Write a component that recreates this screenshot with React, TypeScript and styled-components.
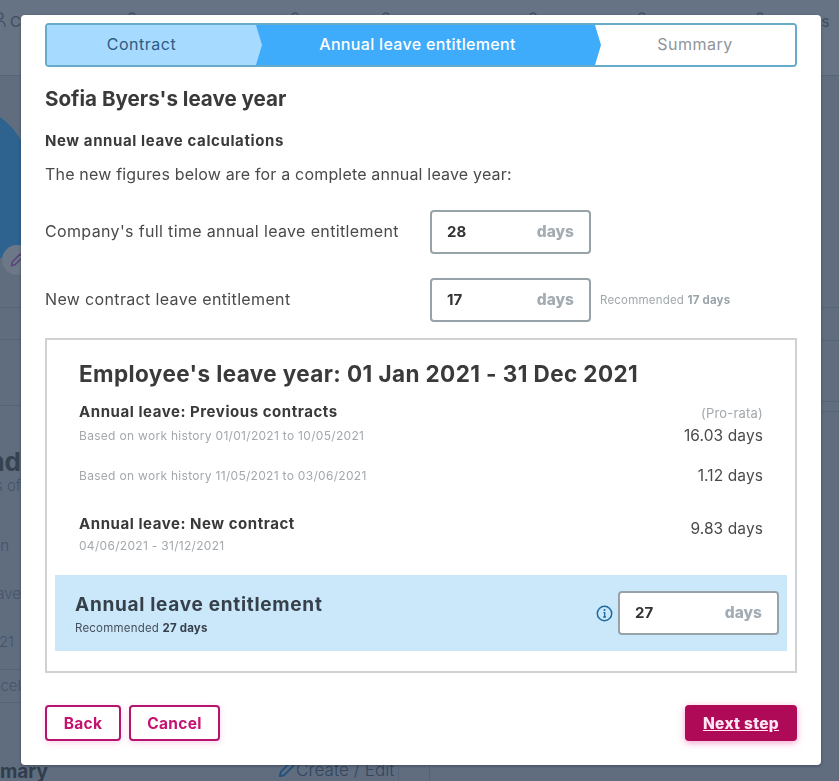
import React from 'react';
import styled, { createGlobalStyle } from 'styled-components';

const GlobalStyle = createGlobalStyle`
  html, body {
    margin: 0;
    padding: 0;
    height: 100%;
  }
  body {
    font-family: Inter, "Liberation Sans", sans-serif;
    color: #3c3c3c;
    overflow: hidden;
  }
`;

// dimmed page behind the dialog
const Page = styled.div`
  width: 839px;
  height: 781px;
  background: #5f6d7f;
  display: flex;
  flex-direction: column;
  overflow: hidden;
  color: #3f4d60;
`;

const Nav = styled.div`
  height: 76px;
  flex: none;
  box-sizing: border-box;
  border-bottom: 1px solid #56647a;
  display: flex;
  margin-left: -6px;
  padding-top: 12px;
  font-size: 15px;
  background: #667384;
`;

const NavItem = styled.div<{ $width: number }>`
  flex: 0 0 ${(p) => p.$width}px;
  display: flex;
  gap: 4px;
  white-space: nowrap;
`;

const Body = styled.div`
  flex: 1;
  display: flex;
  justify-content: space-between;
  min-height: 0;
`;

const SideColumn = styled.div`
  width: 21px;
  display: flex;
  flex-direction: column;
  align-items: flex-end;
`;

const Avatar = styled.div`
  flex: none;
  width: 156px;
  height: 156px;
  margin: 26px -11px 0 0;
  border-radius: 0 78px 0 0;
  background: #2e6390;
`;

const PencilBadge = styled.div`
  flex: none;
  width: 30px;
  height: 30px;
  margin: -13px -11px 0 0;
  border-radius: 50%;
  background: #6c7888;
  display: flex;
  align-items: center;
  justify-content: center;
`;

const SideLine = styled.div<{ $top: number }>`
  flex: none;
  width: 21px;
  height: 1px;
  margin-top: ${(p) => p.$top}px;
  background: #55637a;
`;

const SideText = styled.div<{ $top: number; $bold?: boolean; $right?: number }>`
  flex: none;
  margin-top: ${(p) => p.$top}px;
  margin-right: ${(p) => p.$right ?? 0}px;
  height: 18px;
  line-height: 18px;
  white-space: nowrap;
  font-size: ${(p) => (p.$bold ? 26 : 15)}px;
  font-weight: ${(p) => (p.$bold ? 700 : 300)};
  color: ${(p) => (p.$bold ? '#36424f' : '#46546a')};
`;

const RightColumn = styled.div`
  width: 18px;
  display: flex;
  flex-direction: column;
`;

const PageFooter = styled.div`
  flex: none;
  height: 23px;
  display: flex;
  align-items: center;
  font-size: 17px;
  white-space: nowrap;
`;

const PageFooterTitle = styled.div`
  width: 277px;
  font-weight: 700;
  font-size: 19px;
  color: #303d4c;
  margin-top: 3px;
`;

const EditLink = styled.div`
  display: flex;
  align-items: center;
  gap: 0;
  width: 121px;
  font-weight: 300;
  color: #33465f;
  letter-spacing: 0.1px;
  height: 23px;
  border-right: 1px solid #55637a;
`;

const FooterDivider = styled.div`
  width: 30px;
  height: 23px;
  border-right: 1px solid #55637a;
`;

// dialog
const Modal = styled.div`
  position: fixed;
  left: 21px;
  top: 15px;
  width: 800px;
  height: 750px;
  box-sizing: border-box;
  padding: 8px 24px 0;
  background: #fff;
  border-radius: 4px;
  box-shadow: 0 1px 3px rgba(30, 40, 55, 0.45);
  display: flex;
  flex-direction: column;
`;

const Stepper = styled.div`
  height: 44px;
  box-sizing: border-box;
  border: 2px solid #66abc9;
  border-radius: 4px;
  display: flex;
  overflow: hidden;
  flex: none;
`;

type StepState = 'done' | 'active' | 'todo';

const stepBackground: Record<StepState, string> = {
  done: '#a6daff',
  active: '#3eabfb',
  todo: '#ffffff',
};

const stepColour: Record<StepState, string> = {
  done: '#2f5a80',
  active: '#ffffff',
  todo: '#8e9499',
};

const Step = styled.div<{ $state: StepState; $width?: number; $pad?: number }>`
  position: relative;
  flex: ${(p) => (p.$width ? `0 0 ${p.$width}px` : '1')};
  box-sizing: border-box;
  padding: 0 ${(p) => p.$pad ?? 0}px 2px 0;
  display: flex;
  align-items: center;
  justify-content: center;
  font-size: 16px;
  letter-spacing: ${(p) => (p.$state === 'active' ? 0.33 : 0.5)}px;
  font-weight: ${(p) => (p.$state === 'active' ? 500 : 400)};
  background: ${(p) => stepBackground[p.$state]};
  color: ${(p) => stepColour[p.$state]};

  ${(p) =>
    p.$state !== 'todo' &&
    `
    &::after {
      content: '';
      position: absolute;
      top: 0;
      bottom: 0;
      right: -6px;
      width: 6px;
      background: ${stepBackground[p.$state]};
      clip-path: polygon(0 0, 100% 50%, 0 100%);
      z-index: 1;
    }
  `}
`;

const Title = styled.h1`
  margin: 19px 0 0;
  font-size: 20.6px;
  line-height: 26px;
  font-weight: 700;
  color: #3a3a3a;
`;

const SubTitle = styled.h2`
  margin: 19px 0 0;
  font-size: 15px;
  line-height: 20px;
  letter-spacing: 0.6px;
  font-weight: 700;
  color: #3a3a3a;
`;

const Intro = styled.p`
  margin: 13px 0 0;
  font-size: 16px;
  line-height: 20px;
  font-weight: 400;
  letter-spacing: 0.18px;
  color: #4a4a4a;
`;

const FieldRow = styled.div<{ $top: number }>`
  margin-top: ${(p) => p.$top}px;
  display: flex;
  align-items: center;
  flex: none;
`;

const FieldLabel = styled.div`
  width: 385px;
  padding-bottom: 2px;
  font-size: 16px;
  letter-spacing: 0.35px;
  color: #4a4a4a;
`;

const DaysBox = styled.div`
  width: 161px;
  height: 44px;
  box-sizing: border-box;
  padding: 0 15px 1px;
  border: 2px solid #98a2a9;
  border-radius: 4px;
  background: #fff;
  display: flex;
  align-items: center;
  justify-content: space-between;
  font-size: 15px;
  font-weight: 700;
  color: #333;
`;

const DaysUnit = styled.span`
  font-size: 15.5px;
  font-weight: 800;
  color: #a3acb3;
`;

const Recommended = styled.div`
  margin-left: 9px;
  font-size: 11.5px;
  letter-spacing: 0.2px;
  color: #a0a8ad;

  b {
    font-weight: 700;
    color: #9aa4ab;
  }
`;

const Panel = styled.div`
  margin-top: 16px;
  height: 335px;
  box-sizing: border-box;
  border: 2px solid #cfd1d3;
  padding: 19px 8px 0;
  flex: none;
  display: flex;
  flex-direction: column;
`;

const PanelHeading = styled.h3`
  margin: 0 0 0 24px;
  font-size: 22.5px;
  line-height: 30px;
  letter-spacing: 0.4px;
  font-weight: 700;
  color: #3a3a3a;
`;

const LeaveRow = styled.div<{ $top: number; $centre?: boolean }>`
  margin: ${(p) => p.$top}px 24px 0;
  display: flex;
  justify-content: space-between;
  align-items: ${(p) => (p.$centre ? 'center' : 'flex-start')};
`;

const LeaveInfo = styled.div<{ $gap: number }>`
  display: flex;
  flex-direction: column;
  gap: ${(p) => p.$gap}px;
`;

const LeaveName = styled.div`
  font-size: 15px;
  line-height: 19px;
  letter-spacing: 0.55px;
  font-weight: 700;
  color: #3a3a3a;
`;

const LeaveNote = styled.div`
  font-size: 12px;
  line-height: 17px;
  letter-spacing: 0.3px;
  color: #a2a8ac;
`;

const LeaveValues = styled.div`
  display: flex;
  flex-direction: column;
  align-items: flex-end;
  gap: 3.5px;
  margin-top: 3px;
`;

const ProRata = styled.div`
  font-size: 13px;
  line-height: 17px;
  letter-spacing: 0.2px;
  color: #a2a8ac;
`;

const LeaveValue = styled.div<{ $top?: number }>`
  margin-top: ${(p) => p.$top ?? 0}px;
  font-size: 15.5px;
  line-height: 20px;
  letter-spacing: 0.1px;
  color: #4a4a4a;
`;

const Highlight = styled.div`
  margin-top: auto;
  margin-bottom: 20px;
  height: 76px;
  box-sizing: border-box;
  padding: 0 8px 0 20px;
  background: #cbe8fb;
  display: flex;
  align-items: center;
  justify-content: space-between;
`;

const HighlightText = styled.div`
  display: flex;
  flex-direction: column;
  gap: 4px;
  padding-top: 2px;
`;

const HighlightTitle = styled.div`
  font-size: 19px;
  line-height: 24px;
  letter-spacing: 0.7px;
  font-weight: 700;
  color: #36404a;
`;

const HighlightNote = styled.div`
  font-size: 11.5px;
  line-height: 14px;
  letter-spacing: 0.2px;
  color: #46505a;

  b {
    font-weight: 700;
    color: #36404a;
  }
`;

const HighlightField = styled.div`
  display: flex;
  align-items: center;
  gap: 5px;
`;

const Actions = styled.div`
  margin-top: 32px;
  display: flex;
  gap: 8px;
  flex: none;
`;

const SecondaryButton = styled.button<{ $width: number }>`
  width: ${(p) => p.$width}px;
  height: 36px;
  padding: 0;
  border: 2px solid #b5156e;
  border-radius: 4px;
  background: #fff;
  color: #c4136f;
  font-family: inherit;
  font-size: 15.5px;
  letter-spacing: 0.3px;
  font-weight: 700;
  box-shadow: 0 2px 6px rgba(240, 120, 190, 0.3);
`;

const PrimaryButton = styled.button`
  margin-left: auto;
  width: 112px;
  height: 36px;
  padding: 0;
  border: none;
  border-radius: 4px;
  background: #ae0a58;
  color: #fde6f2;
  font-family: inherit;
  font-size: 15.5px;
  letter-spacing: 0.3px;
  font-weight: 800;
  text-decoration: underline;
  box-shadow: 0 2px 7px rgba(240, 90, 170, 0.55);
`;

const InfoIcon = () => (
  <svg width="17" height="17" viewBox="0 0 17 17" fill="none">
    <circle cx="8.5" cy="8.5" r="7.2" stroke="#1b6aa0" strokeWidth="1.5" />
    <circle cx="8.5" cy="5" r="1" fill="#1b6aa0" />
    <path d="M7.4 7.6h1.3v4.2M7.2 12h2.8" stroke="#1b6aa0" strokeWidth="1.3" />
  </svg>
);

const PencilIcon = ({ colour, size }: { colour: string; size: number }) => (
  <svg width={size} height={size} viewBox="0 0 20 20" fill="none">
    <path
      d="M3 17l1-4.5L14 2.5l3.5 3.5-10 10L3 17z"
      stroke={colour}
      strokeWidth="2"
      strokeLinejoin="round"
    />
  </svg>
);

const NavIcon = () => (
  <svg width="12" height="16" viewBox="0 0 12 16" fill="none">
    <circle cx="6" cy="4" r="3" stroke="#46546a" strokeWidth="1.5" />
    <path d="M1 15c0-4 2-6 5-6s5 2 5 6" stroke="#46546a" strokeWidth="1.5" />
  </svg>
);

const navItems = [
  { label: 'Calendar', width: 132 },
  { label: 'Employee leave', width: 163 },
  { label: 'Pay', width: 91 },
  { label: 'Reports', width: 147 },
  { label: 'Company', width: 109 },
  { label: 'Account', width: 118 },
  { label: 'Updates', width: 85 },
];

const App: React.FC = () => {
  return (
    <>
      <GlobalStyle />
      <Page>
        <Nav>
          {navItems.map((item) => (
            <NavItem key={item.label} $width={item.width}>
              <NavIcon />
              {item.label}
            </NavItem>
          ))}
        </Nav>
        <Body>
          <SideColumn>
            <Avatar />
            <PencilBadge>
              <PencilIcon colour="#5c4379" size={16} />
            </PencilBadge>
            <SideLine $top={32} />
            <SideLine $top={31} />
            <SideLine $top={65} />
            <SideText $top={47} $bold>nd</SideText>
            <SideText $top={6}>s of</SideText>
            <SideText $top={42} $right={12}>n</SideText>
            <SideText $top={30}>ave</SideText>
            <SideText $top={30} $right={7}>021</SideText>
            <SideLine $top={18} />
            <SideText $top={7}>cel</SideText>
            <SideLine $top={7} />
          </SideColumn>
          <RightColumn>
            <SideLine $top={231} />
            <SideLine $top={32} />
            <SideLine $top={60} />
            <SideLine $top={9} />
          </RightColumn>
        </Body>
        <PageFooter>
          <PageFooterTitle>mary</PageFooterTitle>
          <EditLink>
            <PencilIcon colour="#24527f" size={19} />
            Create / Edit
          </EditLink>
          <FooterDivider />
        </PageFooter>
      </Page>

      <Modal>
        <Stepper>
          <Step $state="done" $width={209} $pad={20}>Contract</Step>
          <Step $state="active" $width={339} $pad={16}>Annual leave entitlement</Step>
          <Step $state="todo">Summary</Step>
        </Stepper>

        <Title>Sofia Byers's leave year</Title>
        <SubTitle>New annual leave calculations</SubTitle>
        <Intro>The new figures below are for a complete annual leave year:</Intro>

        <FieldRow $top={26}>
          <FieldLabel>Company's full time annual leave entitlement</FieldLabel>
          <DaysBox>28<DaysUnit>days</DaysUnit></DaysBox>
        </FieldRow>
        <FieldRow $top={24}>
          <FieldLabel>New contract leave entitlement</FieldLabel>
          <DaysBox>17<DaysUnit>days</DaysUnit></DaysBox>
          <Recommended>Recommended <b>17 days</b></Recommended>
        </FieldRow>

        <Panel>
          <PanelHeading>Employee's leave year: 01 Jan 2021 - 31 Dec 2021</PanelHeading>
          <LeaveRow $top={13}>
            <LeaveInfo $gap={6}>
              <LeaveName>Annual leave: Previous contracts</LeaveName>
              <LeaveNote>Based on work history 01/01/2021 to 10/05/2021</LeaveNote>
            </LeaveInfo>
            <LeaveValues>
              <ProRata>(Pro-rata)</ProRata>
              <LeaveValue>16.03 days</LeaveValue>
            </LeaveValues>
          </LeaveRow>
          <LeaveRow $top={20} $centre>
            <LeaveNote>Based on work history 11/05/2021 to 03/06/2021</LeaveNote>
            <LeaveValue>1.12 days</LeaveValue>
          </LeaveRow>
          <LeaveRow $top={28}>
            <LeaveInfo $gap={4}>
              <LeaveName>Annual leave: New contract</LeaveName>
              <LeaveNote>04/06/2021 - 31/12/2021</LeaveNote>
            </LeaveInfo>
            <LeaveValue $top={5}>9.83 days</LeaveValue>
          </LeaveRow>
          <Highlight>
            <HighlightText>
              <HighlightTitle>Annual leave entitlement</HighlightTitle>
              <HighlightNote>Recommended <b>27 days</b></HighlightNote>
            </HighlightText>
            <HighlightField>
              <InfoIcon />
              <DaysBox>27<DaysUnit>days</DaysUnit></DaysBox>
            </HighlightField>
          </Highlight>
        </Panel>

        <Actions>
          <SecondaryButton $width={76}>Back</SecondaryButton>
          <SecondaryButton $width={91}>Cancel</SecondaryButton>
          <PrimaryButton>Next step</PrimaryButton>
        </Actions>
      </Modal>
    </>
  );
};

export default App;
